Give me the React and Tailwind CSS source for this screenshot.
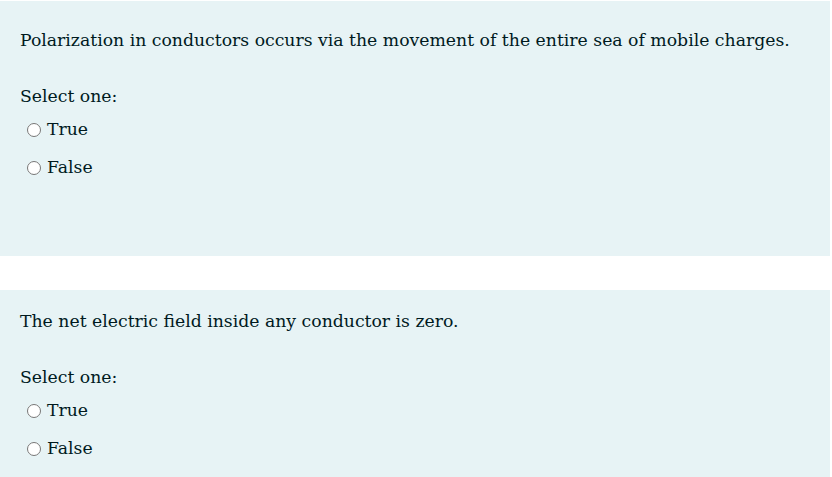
import React from "react";

const questions = [
  {
    id: 1,
    text: "Polarization in conductors occurs via the movement of the entire sea of mobile charges.",
    pad: "pt-[27px] h-[255px] mt-[1px]",
  },
  {
    id: 2,
    text: "The net electric field inside any conductor is zero.",
    pad: "pt-[19px] h-[187px] mt-[34px]",
  },
];

const Option = ({ name, label }) => (
  <label className="flex items-center h-[24px] pl-[7px]">
    <input
      type="radio"
      name={name}
      className="m-0 w-[14px] h-[14px] mr-[6px]"
    />
    <span>{label}</span>
  </label>
);

const Question = ({ q }) => (
  <div className={`w-[830px] bg-[#e7f3f5] pl-[20px] flex flex-col ${q.pad}`}>
    <div className="h-[24px] leading-[24px] whitespace-nowrap">{q.text}</div>
    <div className="h-[24px] leading-[24px] mt-[32px]">Select one:</div>
    <div className="flex flex-col mt-[10px] gap-[14px]">
      <Option name={`q${q.id}`} label="True" />
      <Option name={`q${q.id}`} label="False" />
    </div>
  </div>
);

export default function App() {
  return (
    <div
      className="w-[832px] h-[477px] overflow-hidden bg-white text-[#001a1e] text-[17.25px]"
      style={{ fontFamily: '"DejaVu Serif", serif' }}
    >
      {questions.map((q) => (
        <Question key={q.id} q={q} />
      ))}
    </div>
  );
}
